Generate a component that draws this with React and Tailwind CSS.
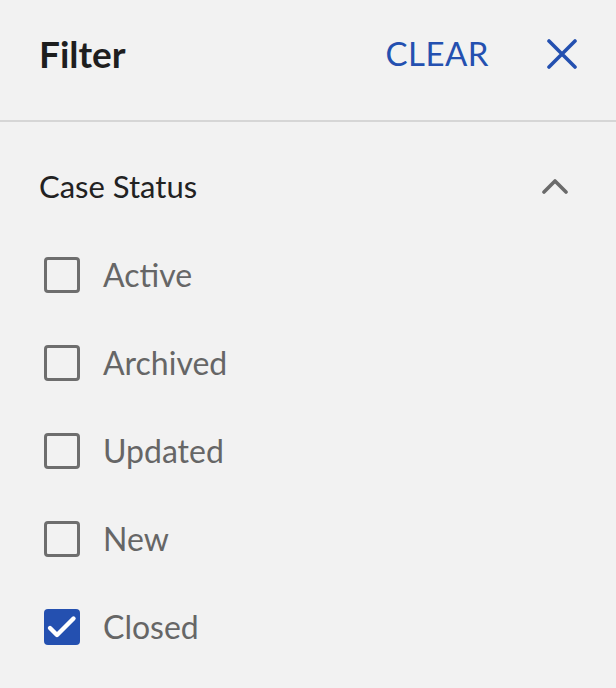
const statuses = [
  { label: "Active", checked: false },
  { label: "Archived", checked: false },
  { label: "Updated", checked: false },
  { label: "New", checked: false },
  { label: "Closed", checked: true },
];

function Checkbox({ checked }) {
  if (checked) {
    return (
      <div className="w-[36px] h-[36px] rounded-[4px] bg-[#2450b0] flex items-center justify-center">
        <svg width="36" height="36" viewBox="0 0 36 36" fill="none">
          <path d="M6 19 L13 26 L29.5 9.5" stroke="white" strokeWidth="4.4" strokeLinecap="round" strokeLinejoin="round" />
        </svg>
      </div>
    );
  }
  return <div className="w-[36px] h-[36px] rounded-[4px] border-[3.5px] border-[#6e6e6e]"></div>;
}

export default function App() {
  return (
    <div className="w-[616px] h-[688px] bg-[#f2f2f2] overflow-hidden" style={{ fontFamily: "Lato, 'Noto Sans', sans-serif" }}>
      <div className="h-[122px] flex items-center justify-between pl-[39px] pr-[39px] pb-[12px] border-b-2 border-[#d6d6d6]">
        <h1 className="text-[37px] font-bold text-[#1e1e1e]">Filter</h1>
        <div className="flex items-center gap-[58px]">
          <button className="text-[33px] text-[#2450b0] tracking-[0.5px]">CLEAR</button>
          <svg width="30" height="30" viewBox="0 0 30 30" fill="none">
            <path d="M2 2 L28 28 M28 2 L2 28" stroke="#2450b0" strokeWidth="3.6" strokeLinecap="round" />
          </svg>
        </div>
      </div>

      <div className="px-[39px] pt-[44px]">
        <div className="h-[40px] flex items-center justify-between">
          <h2 className="text-[31px] text-[#222]">Case Status</h2>
          <svg width="26" height="16" viewBox="0 0 26 16" fill="none" className="mr-[9px]">
            <path d="M2 14 L13 3 L24 14" stroke="#6b6b6b" strokeWidth="3.6" strokeLinecap="round" strokeLinejoin="round" />
          </svg>
        </div>
        <ul className="mt-[25px]">
          {statuses.map((s) => (
            <li key={s.label} className="h-[88px] flex items-center gap-[23px] pl-[5px]">
              <Checkbox checked={s.checked} />
              <span className="text-[32px] text-[#666]">{s.label}</span>
            </li>
          ))}
        </ul>
      </div>
    </div>
  );
}
